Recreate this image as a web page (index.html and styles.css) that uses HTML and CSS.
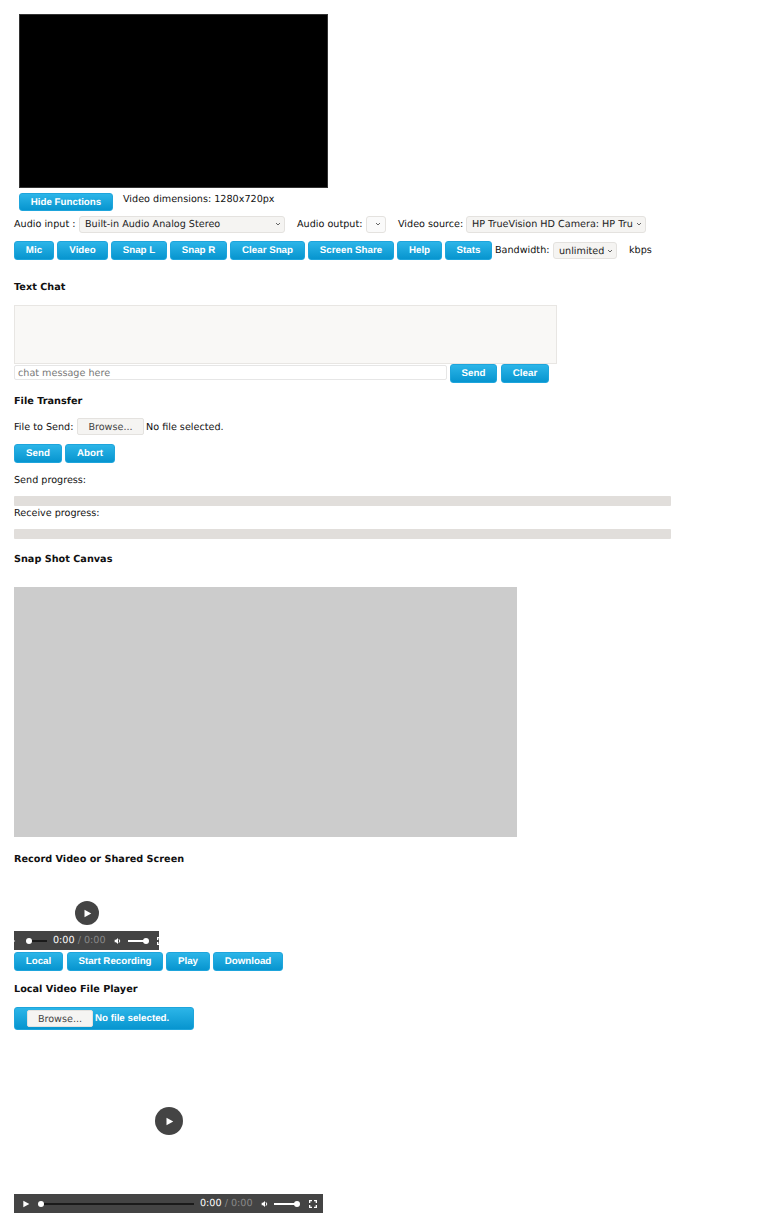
FILE: index.html
```html
<!DOCTYPE html>
<html lang="en">
<head>
<meta charset="utf-8">
<title>Video chat</title>
<link rel="stylesheet" href="styles.css">
</head>
<body>
<svg class="defs" width="0" height="0" aria-hidden="true">
  <symbol id="chev" viewBox="0 0 8 8"><path d="M2 3 4 5 6 3" fill="none" stroke="#666" stroke-width="1"/></symbol>
  <symbol id="play" viewBox="0 0 12 12"><path d="M2 1 11 6 2 11Z" fill="#fff"/></symbol>
  <symbol id="vol" viewBox="0 0 12 12"><path d="M1 4H3L6 1.500V10.500L3 8H1Z" fill="#fff"/><path d="M7.500 3.500Q10 6 7.500 8.500" fill="none" stroke="#fff" stroke-width="1.500"/></symbol>
  <symbol id="full" viewBox="0 0 12 12"><path d="M1 4.500V1H4.500M7.500 1H11V4.500M11 7.500V11H7.500M4.500 11H1V7.500" fill="none" stroke="#fff" stroke-width="2"/></symbol>
</svg>

<section class="top">
  <div class="video"></div>
  <div class="dims-row">
    <button class="btn hide-btn">Hide Functions</button>
    <span class="dims">Video dimensions: 1280x720px</span>
  </div>
</section>

<div class="row sources">
  <span class="in-label">Audio input :</span>
  <div class="select audio-in"><span class="sel-text">Built-in Audio Analog Stereo</span><svg class="chev"><use href="#chev"/></svg></div>
  <span class="out-label">Audio output:</span>
  <div class="select audio-out"><svg class="chev"><use href="#chev"/></svg></div>
  <span class="src-label">Video source:</span>
  <div class="select video-src"><span class="sel-text">HP TrueVision HD Camera: HP Tru</span><svg class="chev"><use href="#chev"/></svg></div>
</div>

<div class="row controls">
  <button class="btn w-mic">Mic</button>
  <button class="btn w-video">Video</button>
  <button class="btn w-snap">Snap L</button>
  <button class="btn w-snap2">Snap R</button>
  <button class="btn w-clear">Clear Snap</button>
  <button class="btn w-share">Screen Share</button>
  <button class="btn w-help">Help</button>
  <button class="btn w-stats">Stats</button>
  <span class="bw-label">Bandwidth:</span>
  <div class="select bw"><span class="sel-text">unlimited</span><svg class="chev"><use href="#chev"/></svg></div>
  <span class="kbps">kbps</span>
</div>

<h3 class="h-chat">Text Chat</h3>
<div class="chat-log"></div>
<div class="chat-row">
  <div class="chat-input">chat message here</div>
  <button class="btn w-send">Send</button>
  <button class="btn w-clear2">Clear</button>
</div>

<h3 class="h-file">File Transfer</h3>
<div class="file-row">
  <span class="file-label">File to Send:</span>
  <div class="browse">Browse...</div>
  <span class="file-none">No file selected.</span>
</div>
<div class="file-btns">
  <button class="btn w-send2">Send</button>
  <button class="btn w-abort">Abort</button>
</div>
<div class="send-label">Send progress:</div>
<div class="progress"></div>
<div class="recv-label">Receive progress:</div>
<div class="progress"></div>

<h3 class="h-snap">Snap Shot Canvas</h3>
<div class="canvas"></div>

<h3 class="h-rec">Record Video or Shared Screen</h3>
<div class="rec-video">
  <div class="big-play rec-play"><svg class="big-icon"><use href="#play"/></svg></div>
  <div class="bar rec-bar">
    <svg class="ic ic-cut"><use href="#play"/></svg>
    <div class="track short"><i class="knob"></i></div>
    <span class="time">0:00 <em>/ 0:00</em></span>
    <svg class="ic ic-vol"><use href="#vol"/></svg>
    <div class="vol-track"><i class="knob end"></i></div>
    <svg class="ic ic-fullcut"><use href="#full"/></svg>
  </div>
</div>
<div class="rec-btns">
  <button class="btn w-local">Local</button>
  <button class="btn w-start">Start Recording</button>
  <button class="btn w-play">Play</button>
  <button class="btn w-dl">Download</button>
</div>

<h3 class="h-local">Local Video File Player</h3>
<div class="btn local-file">
  <div class="browse browse-in">Browse...</div>
  <span class="local-none">No file selected.</span>
</div>
<div class="local-video">
  <div class="big-play local-play"><svg class="big-icon"><use href="#play"/></svg></div>
  <div class="bar local-bar">
    <svg class="ic"><use href="#play"/></svg>
    <div class="track long"><i class="knob"></i></div>
    <span class="time">0:00 <em>/ 0:00</em></span>
    <svg class="ic ic-vol"><use href="#vol"/></svg>
    <div class="vol-track long-vol"><i class="knob end"></i></div>
    <svg class="ic ic-full"><use href="#full"/></svg>
  </div>
</div>
</body>
</html>
```
FILE: styles.css
```css
* { box-sizing: border-box; }
html, body { margin: 0; padding: 0; }
body {
  height: 1228px;
  overflow: hidden;
  padding: 14px 0 0 14px;
  background: #fff;
  color: #111;
  font: 9.65px/14px "DejaVu Sans", sans-serif;
  text-rendering: geometricPrecision;
}
.defs { position: absolute; }
h3 { margin: 0; padding-top: 1px; font: bold 9.7px/14px "DejaVu Sans", sans-serif; color: #111; }

.btn {
  display: block;
  flex: none;
  height: 19px;
  padding: 0;
  border: 1px solid #1ea5dc;
  border-radius: 3px;
  background: linear-gradient(#2cb5e8, #0795cf);
  color: #fff;
  font: bold 9.75px/17px "Liberation Sans", sans-serif;
  text-rendering: geometricPrecision;
  text-align: center;
}

.top { padding-left: 5px; }
.video { width: 309px; height: 174px; background: #000; border: 1px solid #333; }
.dims-row { display: flex; margin-top: 5px; }
.hide-btn { width: 94px; height: 18px; }
.dims { margin-left: 10px; }

.row { display: flex; align-items: center; }
.sources { margin-top: 4px; height: 18px; }
.in-label { width: 62px; white-space: nowrap; padding-top: 2px; }
.select {
  display: flex;
  flex: none;
  align-items: center;
  height: 17px;
  padding-left: 5px;
  border: 1px solid #e4e2df;
  border-radius: 3px;
  background: #f5f4f2;
  color: #222;
  white-space: nowrap;
  overflow: hidden;
}
.sel-text { flex: 1; overflow: hidden; line-height: 15px; padding-top: 1px; }
.chev { flex: none; width: 8px; height: 8px; margin-right: 2px; }
.audio-in { width: 206px; margin-left: 3px; }
.out-label { margin-left: 12px; width: 66px; white-space: nowrap; padding-top: 2px; }
.audio-out { width: 20px; margin-left: 3px; background: #fafafa; padding-left: 7px; }
.src-label { margin-left: 12px; width: 65px; white-space: nowrap; padding-top: 2px; }
.video-src { width: 180px; margin-left: 3px; }

.controls { margin-top: 8px; height: 19px; gap: 3px; }
.w-mic { width: 40px; }
.w-video { width: 51px; }
.w-snap { width: 56px; }
.w-snap2 { width: 57px; }
.w-clear { width: 75px; }
.w-share { width: 86px; }
.w-help { width: 45px; }
.w-stats { width: 47px; }
.bw-label { white-space: nowrap; width: 55px; }
.bw { width: 64px; }
.kbps { margin-left: 9px; }

.h-chat { margin-top: 20px; }
.chat-log {
  width: 543px;
  height: 59px;
  margin-top: 10px;
  background: #f9f8f6;
  border: 1px solid #e8e6e3;
}
.chat-row { display: flex; align-items: flex-start; }
.chat-input {
  width: 433px;
  height: 15px;
  margin-top: 1px;
  padding-left: 3px;
  border: 1px solid #e6e6e6;
  border-radius: 2px;
  color: #777;
  line-height: 15px;
}
.w-send { width: 47px; margin-left: 3px; }
.w-clear2 { width: 48px; margin-left: 4px; }

.h-file { margin-top: 11px; }
.file-row { display: flex; align-items: center; margin-top: 9px; height: 17px; }
.file-label { width: 60px; white-space: nowrap; padding-top: 2px; }
.file-none { padding-top: 2px; }
.browse {
  flex: none;
  width: 67px;
  height: 17px;
  margin: 0 2px 0 3px;
  border: 1px solid #e4e2df;
  border-radius: 2px;
  background: #f5f4f2;
  color: #444;
  line-height: 17px;
  text-align: center;
}
.file-btns { display: flex; gap: 3px; margin-top: 9px; }
.w-send2 { width: 48px; }
.w-abort { width: 50px; }
.send-label { margin-top: 10px; padding-top: 1px; }
.progress {
  width: 657px;
  height: 10px;
  margin-top: 8px;
  background: #e1dedb;
  border-radius: 1px;
}
.recv-label { padding-top: 1px; }

.h-snap { margin-top: 13px; }
.canvas { width: 503px; height: 250px; margin-top: 20px; background: #ccc; }

.h-rec { margin-top: 15px; }
.rec-video { position: relative; width: 145px; height: 83px; }
.big-play {
  position: absolute;
  display: flex;
  align-items: center;
  justify-content: center;
  border-radius: 50%;
  background: #444;
}
.rec-play { left: 61px; top: 34px; width: 24px; height: 24px; }
.local-play { left: 141px; top: 77px; width: 28px; height: 28px; }
.big-icon { width: 9px; height: 9px; margin-left: 1px; }

.bar {
  position: absolute;
  left: 0;
  bottom: 0;
  display: flex;
  align-items: center;
  height: 19px;
  background: #444;
  color: #fff;
  overflow: hidden;
}
.rec-bar { width: 145px; }
.local-bar { width: 309px; padding-left: 8px; }
.ic { flex: none; width: 8px; height: 8px; }
.ic-cut { margin-left: -6px; }
.ic-vol { margin-left: 8px; }
.ic-fullcut { margin-left: 9px; }
.ic-full { margin-left: 10px; }
.track {
  position: relative;
  flex: none;
  height: 2px;
  background: #1a1a1a;
}
.track.short { width: 18px; margin-left: 13px; }
.track.long { width: 153px; margin-left: 11px; }
.knob {
  position: absolute;
  left: -3px;
  top: -2px;
  width: 6px;
  height: 6px;
  border-radius: 50%;
  background: #fff;
}
.knob.end { left: auto; right: -1px; }
.time { flex: none; margin-left: 6px; white-space: nowrap; }
.time em { font-style: normal; color: #8a8a8a; }
.vol-track {
  position: relative;
  flex: none;
  width: 20px;
  height: 2px;
  margin-left: 6px;
  background: #fff;
}
.long-vol { width: 25px; margin-left: 5px; }

.rec-btns { display: flex; gap: 3px; margin-top: 2px; }
.rec-btns .btn { line-height: 18px; }
.w-local { width: 49px; }
.w-start { width: 96px; margin-left: 1px; }
.w-play { width: 44px; }
.w-dl { width: 70px; }

.h-local { margin-top: 11px; }
.local-file {
  display: flex;
  align-items: center;
  width: 180px;
  height: 23px;
  margin-top: 10px;
  padding-left: 12px;
  text-align: left;
}
.browse-in {
  width: 66px;
  margin: 0 2px 0 0;
  font: 9.65px/17px "DejaVu Sans", sans-serif;
  text-align: center;
}
.local-none { white-space: nowrap; line-height: 14px; }
.local-video { position: relative; width: 309px; height: 183px; }
```
